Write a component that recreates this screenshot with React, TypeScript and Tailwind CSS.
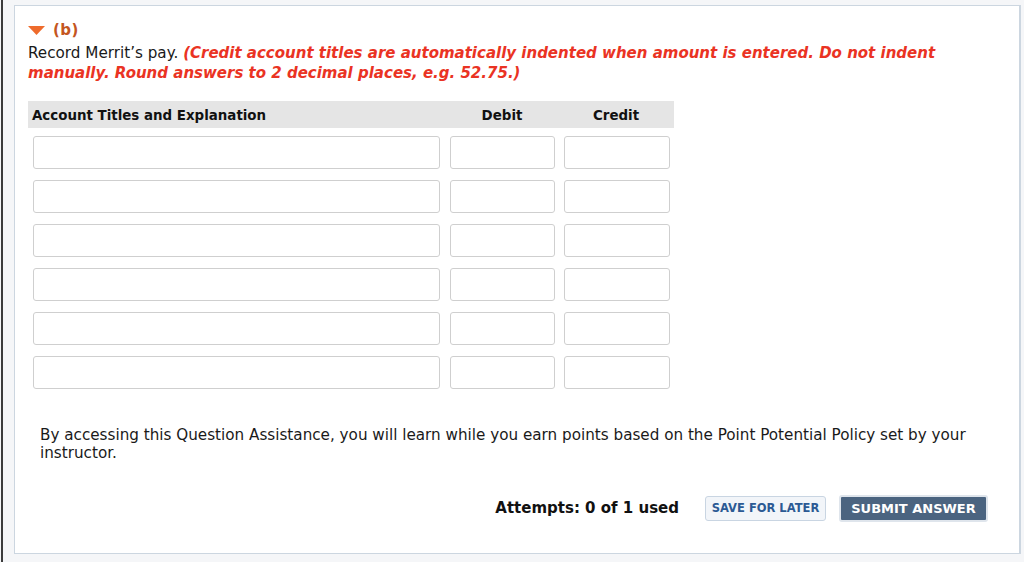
import React from "react";

const rows = [0, 1, 2, 3, 4, 5];

export default function App() {
  return (
    <div
      className="w-[1024px] h-[562px] bg-[#f5f6f8] pl-px overflow-hidden"
      style={{ fontFamily: '"DejaVu Sans", Verdana, sans-serif' }}
    >
      <div className="h-full border-l-2 border-[#3c3c3c] pl-[11px] pt-[5px]">
        <div className="w-[1007px] h-[549px] bg-white border border-[#ccd6e0] border-r-2 pl-[13px] pt-[15px]">
          <div className="flex items-center h-[18px] gap-[8px]">
            <svg width="17" height="9" viewBox="0 0 17 9" className="mt-[1px]">
              <polygon points="0,0 17,0 8.5,9" fill="#ee6b2c" />
            </svg>
            <span className="text-[15px] font-bold text-[#c4561f] tracking-[0.5px]">(b)</span>
          </div>
          <div className="mt-[4px] text-[15.2px] leading-[20px] text-[#1a1a1a]">
            Record Merrit’s pay.{" "}
            <span className="font-bold italic text-[#ea3323] text-[15px]">
              (Credit account titles are automatically indented when amount is entered. Do not indent
              <br />
              manually. Round answers to 2 decimal places, e.g. 52.75.)
            </span>
          </div>
          <div className="mt-[18px] w-[646px]">
            <div className="flex items-center h-[27px] pt-[3px] bg-[#e5e5e5] text-[13.4px] font-bold text-[#111]">
              <div className="w-[417px] pl-[4px]">Account Titles and Explanation</div>
              <div className="w-[114px] text-center">Debit</div>
              <div className="w-[114px] text-center">Credit</div>
            </div>
            <div className="flex flex-col gap-[11px] pt-[8px] pl-[5px]">
              {rows.map((r) => (
                <div key={r} className="flex h-[33px]">
                  <input className="w-[407px] h-[33px] border border-[#cfcfcf] rounded-[3px] bg-white" />
                  <input className="ml-[10px] w-[105px] h-[33px] border border-[#cfcfcf] rounded-[3px] bg-white" />
                  <input className="ml-[9px] w-[106px] h-[33px] border border-[#cfcfcf] rounded-[3px] bg-white" />
                </div>
              ))}
            </div>
          </div>
          <div className="mt-[37px] pl-[12px] text-[15.2px] leading-[18px] text-[#1a1a1a]">
            By accessing this Question Assistance, you will learn while you earn points based on the Point Potential Policy set by your
            <br />
            instructor.
          </div>
          <div className="mt-[33px] flex items-center justify-end pr-[31px]">
            <span className="text-[15px] font-bold text-[#111]">Attempts: 0 of 1 used</span>
            <button className="ml-[26px] h-[25px] w-[121px] rounded-[3px] border border-[#c9d5e2] bg-[#f2f5f9] text-[11.5px] font-bold text-[#2c5a94]">
              SAVE FOR LATER
            </button>
            <button className="ml-[13px] h-[27px] w-[149px] rounded-[3px] border-2 border-[#dfe5ec] bg-[#4b6480] text-[13px] font-bold text-white">
              SUBMIT ANSWER
            </button>
          </div>
        </div>
      </div>
    </div>
  );
}
